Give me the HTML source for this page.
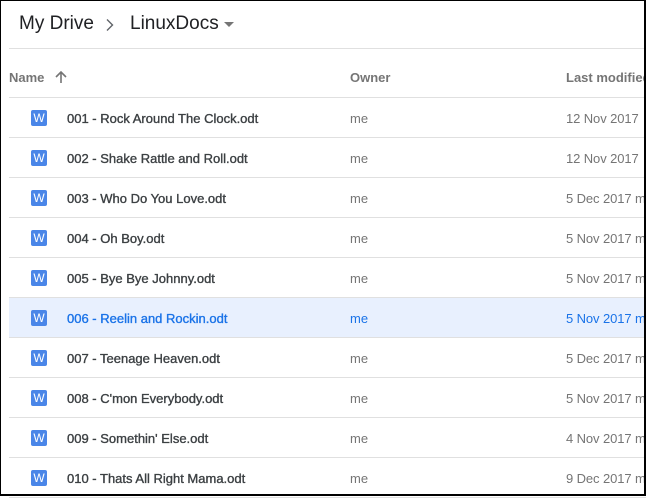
<!DOCTYPE html>
<html><head><style>
*{margin:0;padding:0;box-sizing:border-box}
body{width:646px;height:496px;overflow:hidden;background:#fff;font-family:"Liberation Sans",Arial,sans-serif;position:relative}
.frame{position:absolute;left:0;top:0;width:646px;height:496px;border:1px solid #000;border-right-width:2px;border-bottom-width:2px;pointer-events:none;z-index:5}
.t{position:absolute;top:13px;font-size:19px;color:#202124;white-space:nowrap}
.caret{position:absolute;left:224px;top:22px;width:0;height:0;border-left:5px solid transparent;border-right:5px solid transparent;border-top:5px solid #757575}
.hline{position:absolute;left:9px;right:0;height:1px;background:#e0e0e0}
.hdr{position:absolute;top:70px;font-size:13px;color:#757575;font-weight:bold;white-space:nowrap}
.row{position:absolute;left:9px;right:0;height:40px;border-bottom:1px solid #e0e0e0;font-size:13px}
.row.sel{background:#e8f0fe}
.ic{position:absolute;left:22px;top:12px;width:16px;height:16px;background:#4a86e8;border-radius:2px;color:#fff;font-size:12px;text-align:center;line-height:16px}
.nm{position:absolute;left:58px;top:13px;color:#3c4043;white-space:nowrap;-webkit-text-stroke:0.35px #3c4043}
.ow{position:absolute;left:341px;top:13px;color:#757575}
.dt{position:absolute;left:557px;top:13px;color:#757575;white-space:nowrap;letter-spacing:-0.1px}
.m{position:absolute;left:626px;top:13px;color:#757575}
.sel .nm,.sel .ow,.sel .dt,.sel .m{color:#1a73e8;-webkit-text-stroke-color:#1a73e8}
</style></head><body>
<div class="frame"></div>
<div class="t" style="left:19px">My Drive</div>
<svg style="position:absolute;left:105px;top:18px" width="10" height="14" viewBox="0 0 10 14"><path d="M2 1.5l5.5 5.5-5.5 5.5" stroke="#5f6368" stroke-width="1.4" fill="none"/></svg>
<div class="t" style="left:130px">LinuxDocs</div>
<div class="caret"></div>
<div class="hline" style="top:48px"></div>
<div class="hdr" style="left:9px">Name</div>
<svg style="position:absolute;left:54px;top:70px" width="14" height="14" viewBox="0 0 14 14"><path d="M7 13V2M2 7l5-5 5 5" stroke="#757575" stroke-width="1.6" fill="none"/></svg>
<div class="hdr" style="left:350px">Owner</div>
<div class="hdr" style="left:566px">Last modified</div>
<div class="hline" style="top:97px"></div>
<div class="row" style="top:98px"><div class="ic">W</div><div class="nm">001 - Rock Around The Clock.odt</div><div class="ow">me</div><div class="dt">12 Nov 2017</div></div>
<div class="row" style="top:138px"><div class="ic">W</div><div class="nm">002 - Shake Rattle and Roll.odt</div><div class="ow">me</div><div class="dt">12 Nov 2017</div></div>
<div class="row" style="top:178px"><div class="ic">W</div><div class="nm">003 - Who Do You Love.odt</div><div class="ow">me</div><div class="dt">5 Dec 2017</div><div class="m">m</div></div>
<div class="row" style="top:218px"><div class="ic">W</div><div class="nm">004 - Oh Boy.odt</div><div class="ow">me</div><div class="dt">5 Nov 2017</div><div class="m">m</div></div>
<div class="row" style="top:258px"><div class="ic">W</div><div class="nm">005 - Bye Bye Johnny.odt</div><div class="ow">me</div><div class="dt">5 Nov 2017</div><div class="m">m</div></div>
<div class="row sel" style="top:298px"><div class="ic">W</div><div class="nm">006 - Reelin and Rockin.odt</div><div class="ow">me</div><div class="dt">5 Nov 2017</div><div class="m">m</div></div>
<div class="row" style="top:338px"><div class="ic">W</div><div class="nm">007 - Teenage Heaven.odt</div><div class="ow">me</div><div class="dt">5 Dec 2017</div><div class="m">m</div></div>
<div class="row" style="top:378px"><div class="ic">W</div><div class="nm">008 - C'mon Everybody.odt</div><div class="ow">me</div><div class="dt">5 Nov 2017</div><div class="m">m</div></div>
<div class="row" style="top:418px"><div class="ic">W</div><div class="nm">009 - Somethin' Else.odt</div><div class="ow">me</div><div class="dt">4 Nov 2017</div><div class="m">m</div></div>
<div class="row" style="top:458px"><div class="ic">W</div><div class="nm">010 - Thats All Right Mama.odt</div><div class="ow">me</div><div class="dt">9 Dec 2017</div><div class="m">m</div></div>
</body></html>
